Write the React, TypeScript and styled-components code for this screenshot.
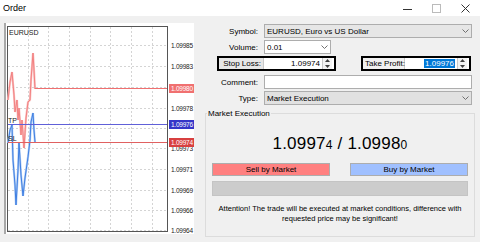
import React from "react";
import styled, { createGlobalStyle } from "styled-components";

const GlobalStyle = createGlobalStyle`
  html, body {
    margin: 0;
    padding: 0;
    background: #f0f0f0;
  }
  body {
    font-family: "Liberation Sans", Arial, sans-serif;
    color: #000;
  }
`;

const Window = styled.div`
  width: 480px;
  height: 242px;
  background: #f0f0f0;
  overflow: hidden;
  display: flex;
  flex-direction: column;
`;

const TitleBar = styled.div`
  height: 16px;
  background: #fff;
  display: flex;
  align-items: center;
  padding-left: 3px;
  font-size: 9px;
`;

const Title = styled.span`
  flex: 1;
`;

const WinButton = styled.div`
  width: 29px;
  height: 16px;
  display: flex;
  align-items: center;
  justify-content: center;
`;

const Body = styled.div`
  display: flex;
  padding: 7px 0 0 4px;
`;

const ChartPanel = styled.div`
  width: 190px;
  height: 211px;
  background: #fff;
  border-left: 2px solid #a9a9a9;
  box-sizing: border-box;
`;

const Side = styled.div`
  margin-left: 11px;
  width: 270px;
  display: flex;
  flex-direction: column;
  font-size: 8px;
  white-space: nowrap;
`;

const FormRow = styled.div<{ $mt?: number }>`
  display: grid;
  grid-template-columns: 53px 1fr;
  column-gap: 6px;
  align-items: center;
  height: 14px;
  margin-top: ${(p) => p.$mt ?? 2}px;
`;

const Label = styled.div`
  text-align: right;
`;

const Field = styled.div<{ $w?: number; $bg?: string }>`
  height: 14px;
  width: ${(p) => (p.$w ? `${p.$w}px` : "auto")};
  background: ${(p) => p.$bg ?? "#fff"};
  border: 1px solid #adadad;
  box-sizing: border-box;
  display: flex;
  align-items: center;
  padding-left: 2px;
  margin-right: 3px;
`;

const FieldText = styled.span`
  flex: 1;
`;

const Chevron = styled.span`
  width: 12px;
  display: flex;
  justify-content: center;
`;

const SLRow = styled.div`
  display: flex;
  align-items: center;
  margin-top: 2px;
  height: 15px;
`;

const HiBox = styled.div<{ $ml: number; $w: number }>`
  margin-left: ${(p) => p.$ml}px;
  width: ${(p) => p.$w}px;
  height: 15px;
  border: 2px solid #000;
  box-sizing: border-box;
  display: flex;
  align-items: center;
  background: #fff;
`;

const BoxLabel = styled.div<{ $w: number; $gray?: boolean }>`
  width: ${(p) => p.$w}px;
  height: 11px;
  display: flex;
  align-items: center;
  justify-content: ${(p) => (p.$gray ? "flex-end" : "flex-start")};
  padding: 0 2px;
  box-sizing: border-box;
  background: ${(p) => (p.$gray ? "#e6e6e6" : "#f0f0f0")};
  border-right: 1px solid #c8c8c8;
`;

const NumInput = styled.div`
  flex: 1;
  height: 11px;
  display: flex;
  align-items: center;
  justify-content: flex-end;
  padding-right: 2px;
`;

const Selected = styled.span`
  background: #0078d7;
  color: #fff;
  padding: 0 1px;
`;

const Spinner = styled.div`
  width: 9px;
  height: 11px;
  margin-right: 2px;
  border-left: 1px solid #c8c8c8;
  display: flex;
  flex-direction: column;
  align-items: center;
  justify-content: space-around;
  background: #f3f3f3;
`;

const Group = styled.fieldset`
  margin: 4px 0 0 0;
  padding: 2px 6px 6px;
  height: 128px;
  box-sizing: border-box;
  border: 1px solid #dcdcdc;
  display: flex;
  flex-direction: column;
  align-items: stretch;
`;

const Legend = styled.legend`
  padding: 0 1px;
  margin-left: -5px;
`;

const Quote = styled.div`
  text-align: center;
  font-size: 17px;
  line-height: 20px;
  margin-top: 14px;
  letter-spacing: 0.2px;
`;

const Pip = styled.span`
  font-size: 12px;
`;

const ButtonRow = styled.div`
  display: flex;
  justify-content: space-between;
  margin-top: 8px;
`;

const TradeButton = styled.div<{ $bg: string }>`
  width: 118px;
  height: 13px;
  background: ${(p) => p.$bg};
  border: 1px solid #adadad;
  box-sizing: border-box;
  display: flex;
  align-items: center;
  justify-content: center;
`;

const Bar = styled.div`
  margin-top: 5px;
  height: 13px;
  background: #cccccc;
  border: 1px solid #c4c4c4;
`;

const Note = styled.div`
  margin-top: 8px;
  text-align: center;
  font-size: 7.5px;
  line-height: 9.5px;
`;

const ChevronIcon = () => (
  <svg width="7" height="4" viewBox="0 0 7 4">
    <path d="M0.5 0.5 L3.5 3.5 L6.5 0.5" fill="none" stroke="#707070" strokeWidth="1" />
  </svg>
);

const Arrows = () => (
  <Spinner>
    <svg width="5" height="3" viewBox="0 0 5 3">
      <path d="M0 3 L2.5 0 L5 3 Z" fill="#404040" />
    </svg>
    <svg width="5" height="3" viewBox="0 0 5 3">
      <path d="M0 0 L2.5 3 L5 0 Z" fill="#404040" />
    </svg>
  </Spinner>
);

const axis = [
  { y: 45, v: "1.09985" },
  { y: 66, v: "1.09983" },
  { y: 108, v: "1.09978" },
  { y: 148, v: "1.09973" },
  { y: 169, v: "1.09971" },
  { y: 190, v: "1.09969" },
  { y: 210, v: "1.09966" },
  { y: 230, v: "1.09964" },
];

const gridY = [45, 66, 87, 108, 128, 148, 169, 190, 210, 230];
const gridX = [28, 48, 69, 90, 110, 131, 152];

const bid =
  "8,100 10,82 12,72 14,95 15,112 17,100 18,120 19,108 21,135 22,120 24,148 26,118 28,102 30,100 31,80 33,53 34,70 35,89";
const ask =
  "8,143 10,130 12,125 13,160 15,185 16,205 18,170 19,143 21,175 23,196 25,178 28,157 30,140 31,122 33,113 34,130 35,142";

const tick = { fontSize: 6.5, fontFamily: "Liberation Sans, sans-serif" };

const Chart = () => (
  <svg width="188" height="211" viewBox="6 23 188 211" style={{ display: "block" }}>
    {gridY.map((y) => (
      <line key={"h" + y} x1="8" x2="167" y1={y + 0.5} y2={y + 0.5} stroke="#d4d4d4" strokeDasharray="2 2" />
    ))}
    {gridX.map((x) => (
      <line key={"v" + x} x1={x + 0.5} x2={x + 0.5} y1="27" y2="231" stroke="#d4d4d4" strokeDasharray="2 2" />
    ))}
    <rect x="7.5" y="26.5" width="160" height="205" fill="none" stroke="#555" />
    <polyline points={bid} fill="none" stroke="#f9c0c0" strokeWidth="2.2" />
    <polyline points={bid} fill="none" stroke="#f38080" strokeWidth="1" />
    <polyline points={ask} fill="none" stroke="#b0cdf5" strokeWidth="2.2" />
    <polyline points={ask} fill="none" stroke="#3f7fe2" strokeWidth="1" />
    <line x1="35" x2="167" y1="88.5" y2="88.5" stroke="#f07070" />
    <line x1="8" x2="167" y1="124.5" y2="124.5" stroke="#6060d8" />
    <line x1="8" x2="167" y1="142.5" y2="142.5" stroke="#e06060" />
    <text x="9" y="35" {...tick} fontSize={7} fill="#222">EURUSD</text>
    <text x="8" y="123" {...tick} fontSize={7} fill="#222">TP</text>
    <text x="8" y="141" {...tick} fontSize={7} fill="#222">SL</text>
    {axis.map((a) => (
      <text key={a.v} x="171" y={a.y + 2.5} {...tick} textLength={22} fill="#222">
        {a.v}
      </text>
    ))}
    <rect x="169" y="84" width="25" height="9" fill="#f07070" />
    <text x="171" y="91" {...tick} textLength={22} fill="#fff">1.09980</text>
    <rect x="169" y="120" width="25" height="9" fill="#3535c8" />
    <text x="171" y="127" {...tick} textLength={22} fill="#fff">1.09976</text>
    <rect x="169" y="138" width="25" height="9" fill="#d84040" />
    <text x="171" y="145" {...tick} textLength={22} fill="#fff">1.09974</text>
  </svg>
);

export default function App() {
  return (
    <Window>
      <GlobalStyle />
      <TitleBar>
        <Title>Order</Title>
        <WinButton>
          <svg width="9" height="9" viewBox="0 0 9 9">
            <line x1="0" x2="9" y1="5.5" y2="5.5" stroke="#333" />
          </svg>
        </WinButton>
        <WinButton>
          <svg width="9" height="9" viewBox="0 0 9 9">
            <rect x="0.5" y="0.5" width="8" height="8" fill="none" stroke="#bbb" />
          </svg>
        </WinButton>
        <WinButton>
          <svg width="9" height="9" viewBox="0 0 9 9">
            <path d="M0.5 0.5 L8.5 8.5 M8.5 0.5 L0.5 8.5" stroke="#333" />
          </svg>
        </WinButton>
      </TitleBar>
      <Body>
        <ChartPanel>
          <Chart />
        </ChartPanel>
        <Side>
          <FormRow $mt={1}>
            <Label>Symbol:</Label>
            <Field $bg="#e6e6e6">
              <FieldText>EURUSD, Euro vs US Dollar</FieldText>
              <Chevron>
                <ChevronIcon />
              </Chevron>
            </Field>
          </FormRow>
          <FormRow>
            <Label>Volume:</Label>
            <Field $w={67}>
              <FieldText>0.01</FieldText>
              <Chevron>
                <ChevronIcon />
              </Chevron>
            </Field>
          </FormRow>
          <SLRow>
            <HiBox $ml={12} $w={119}>
              <BoxLabel $w={45} $gray>
                Stop Loss:
              </BoxLabel>
              <NumInput>1.09974</NumInput>
              <Arrows />
            </HiBox>
            <HiBox $ml={25} $w={110}>
              <BoxLabel $w={42}>Take Profit:</BoxLabel>
              <NumInput>
                <Selected>1.09976</Selected>
              </NumInput>
              <Arrows />
            </HiBox>
          </SLRow>
          <FormRow $mt={4}>
            <Label>Comment:</Label>
            <Field />
          </FormRow>
          <FormRow>
            <Label>Type:</Label>
            <Field $bg="#e1e1e1">
              <FieldText>Market Execution</FieldText>
              <Chevron>
                <ChevronIcon />
              </Chevron>
            </Field>
          </FormRow>
          <Group>
            <Legend>Market Execution</Legend>
            <Quote>
              1.0997<Pip>4</Pip> / 1.0998<Pip>0</Pip>
            </Quote>
            <ButtonRow>
              <TradeButton $bg="#ff8080">Sell by Market</TradeButton>
              <TradeButton $bg="#a0c0ff">Buy by Market</TradeButton>
            </ButtonRow>
            <Bar />
            <Note>
              Attention! The trade will be executed at market conditions, difference with
              <br />
              requested price may be significant!
            </Note>
          </Group>
        </Side>
      </Body>
    </Window>
  );
}
